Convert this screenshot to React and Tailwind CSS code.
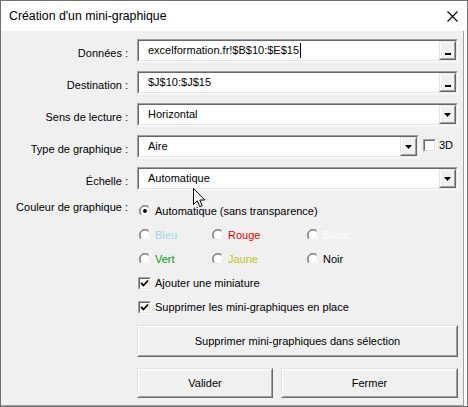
import React from "react";

function Sunken({ className = "", children }) {
  return (
    <div className={`border border-t-[#a0a0a0] border-l-[#a0a0a0] border-r-white border-b-white ${className}`}>
      <div className="h-full border border-t-[#696969] border-l-[#696969] border-r-[#e3e3e3] border-b-[#e3e3e3] bg-white flex items-stretch">
        {children}
      </div>
    </div>
  );
}

function Raised({ className = "", inner = "", children }) {
  return (
    <div className={`border border-t-[#e3e3e3] border-l-[#e3e3e3] border-r-[#696969] border-b-[#696969] bg-[#f0f0f0] ${className}`}>
      <div className={`h-full border border-t-white border-l-white border-r-[#a0a0a0] border-b-[#a0a0a0] flex ${inner}`}>
        {children}
      </div>
    </div>
  );
}

function Field({ value, kind, caret = false, className = "w-full" }) {
  return (
    <Sunken className={`h-[23px] ${className}`}>
      <div className="flex-1 flex items-center pl-[9px] text-[11px] leading-none text-black whitespace-nowrap overflow-hidden">
        <span>{value}</span>
        {caret && <span className="w-px h-[15px] bg-black ml-px" />}
      </div>
      {kind === "dots" ? (
        <Raised className="w-[17px]" inner="items-end justify-center pb-[3px]">
          <div className="w-[6px] h-[2px] bg-black" />
        </Raised>
      ) : (
        <Raised className="w-[17px]" inner="items-center justify-center">
          <svg width="7" height="4" viewBox="0 0 7 4">
            <polygon points="0,0 7,0 3.5,4" fill="#000" />
          </svg>
        </Raised>
      )}
    </Sunken>
  );
}

function Label({ children }) {
  return (
    <div className="h-[23px] pt-[6px] flex items-center justify-end text-[11px] text-black whitespace-nowrap">
      {children}
    </div>
  );
}

function Radio({ checked = false }) {
  return (
    <svg width="12" height="12" viewBox="0 0 12 12" className="shrink-0">
      <circle cx="6" cy="6" r="5.5" fill="#ffffff" />
      <path d="M1.76 10.24 A6 6 0 0 1 10.24 1.76" fill="none" stroke="#a0a0a0" strokeWidth="1" />
      <path d="M2.46 9.54 A5 5 0 0 1 9.54 2.46" fill="none" stroke="#696969" strokeWidth="1" />
      <path d="M10.24 1.76 A6 6 0 0 1 1.76 10.24" fill="none" stroke="#ffffff" strokeWidth="1" />
      <path d="M9.54 2.46 A5 5 0 0 1 2.46 9.54" fill="none" stroke="#e3e3e3" strokeWidth="1" />
      {checked && <circle cx="6" cy="6" r="2" fill="#000" />}
    </svg>
  );
}

function Check({ checked = false }) {
  return (
    <div className="w-[13px] h-[13px] shrink-0 border border-t-[#a0a0a0] border-l-[#a0a0a0] border-r-white border-b-white">
      <div className="w-full h-full border border-t-[#696969] border-l-[#696969] border-r-[#e3e3e3] border-b-[#e3e3e3] bg-white flex items-center justify-center">
        {checked && (
          <svg width="9" height="9" viewBox="0 0 9 9">
            <polyline points="1,4 3.5,6.5 8,1.5" fill="none" stroke="#000" strokeWidth="1.8" />
          </svg>
        )}
      </div>
    </div>
  );
}

function RadioItem({ children, checked, color = "text-black" }) {
  return (
    <div className="flex items-center gap-[4px] h-[16px]">
      <Radio checked={checked} />
      <span className={`text-[11px] leading-[16px] whitespace-nowrap ${color}`}>{children}</span>
    </div>
  );
}

function CheckItem({ children, checked }) {
  return (
    <div className="flex items-center gap-[4px] h-[16px] -ml-[1px]">
      <Check checked={checked} />
      <span className="text-[11px] leading-[16px] whitespace-nowrap text-black">{children}</span>
    </div>
  );
}

export default function App() {
  return (
    <div className="relative w-[468px] h-[407px] border border-[#707070] bg-[#fafafa] flex flex-col overflow-hidden font-['Liberation_Sans',Arial,sans-serif] text-black">
      {/* Title bar */}
      <div className="h-[30px] bg-white flex items-center justify-between pl-[8px] pr-[9px] shrink-0">
        <span className="text-[12.3px] text-black">Création d'un mini-graphique</span>
        <svg width="11" height="11" viewBox="0 0 11 11">
          <path d="M0.5 0.5 L10.5 10.5 M10.5 0.5 L0.5 10.5" stroke="#000" strokeWidth="1.1" fill="none" />
        </svg>
      </div>

      {/* Body */}
      <div className="flex h-[375px]">
        <div className="w-[463px] h-full bg-[#f0f0f0] border-r border-b border-[#a0a0a0] flex flex-col pt-[8px] pr-[5px]">
          <div className="grid grid-cols-[127px_1fr] gap-x-[9px] gap-y-[9px]">
            <Label>Données :</Label>
            <Field value="excelformation.fr!$B$10:$E$15" kind="dots" caret />
            <Label>Destination :</Label>
            <Field value="$J$10:$J$15" kind="dots" />
            <Label>Sens de lecture :</Label>
            <Field value="Horizontal" kind="drop" />
            <Label>Type de graphique :</Label>
            <div className="flex items-center">
              <Field value="Aire" kind="drop" className="w-[282px]" />
              <div className="flex items-center ml-[4px] -mt-[2px]">
                <Check />
                <span className="text-[11px] ml-[3px]">3D</span>
              </div>
            </div>
            <Label>Échelle :</Label>
            <Field value="Automatique" kind="drop" />
          </div>

          <div className="grid grid-cols-[127px_1fr] gap-x-[9px] mt-[13px]">
            <div className="-mt-[4px] h-[16px] leading-[16px] text-[11px] text-right whitespace-nowrap">
              Couleur de graphique :
            </div>
            <div className="flex flex-col gap-[8px] pl-[2px]">
              <RadioItem checked>Automatique (sans transparence)</RadioItem>
              <div className="grid grid-cols-[73px_95px_1fr]">
                <RadioItem color="text-[#9fd3ea]">Bleu</RadioItem>
                <RadioItem color="text-[#e00000]">Rouge</RadioItem>
                <RadioItem color="text-white">Blanc</RadioItem>
              </div>
              <div className="grid grid-cols-[73px_95px_1fr]">
                <RadioItem color="text-[#0a9a0a]">Vert</RadioItem>
                <RadioItem color="text-[#c4c423]">Jaune</RadioItem>
                <RadioItem>Noir</RadioItem>
              </div>
              <CheckItem checked>Ajouter une miniature</CheckItem>
              <CheckItem checked>Supprimer les mini-graphiques en place</CheckItem>
            </div>
          </div>

          <div className="flex flex-col pl-[136px] mt-[10px] gap-[11px]">
            <Raised className="h-[32px] w-full" inner="items-center justify-center">
              <span className="text-[11px]">Supprimer mini-graphiques dans sélection</span>
            </Raised>
            <div className="flex gap-[8px]">
              <Raised className="h-[30px] w-[136px]" inner="items-center justify-center">
                <span className="text-[11px]">Valider</span>
              </Raised>
              <Raised className="h-[30px] flex-1" inner="items-center justify-center">
                <span className="text-[11px]">Fermer</span>
              </Raised>
            </div>
          </div>
        </div>
        <div className="flex-1 bg-[#fafafa]" />
      </div>

      {/* Mouse pointer */}
      <svg className="absolute left-[192px] top-[187px]" width="13" height="20" viewBox="0 0 13 20">
        <path d="M0.5 0.5 L0.5 16.5 L4.3 12.8 L6.8 18.7 L9.2 17.7 L6.8 12 L11.8 12 Z" fill="#fff" stroke="#000" strokeWidth="1" strokeLinejoin="miter" />
      </svg>
    </div>
  );
}
